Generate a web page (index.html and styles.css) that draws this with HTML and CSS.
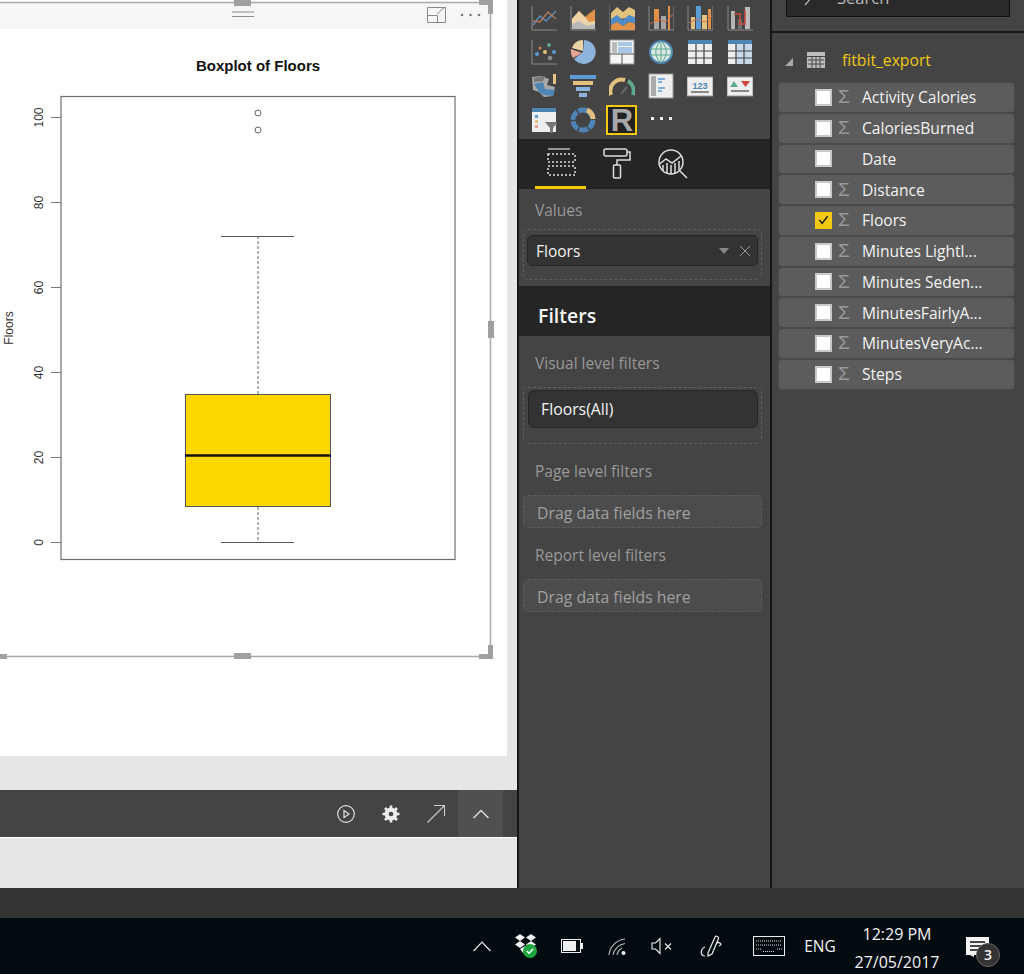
FILE: index.html
```html
<!DOCTYPE html>
<html>
    <head>
        <meta charset="utf-8">
        <title>Boxplot of Floors</title>

        <link rel="stylesheet" href="styles.css">
    </head>

    <body>

        <div class="workspace">

            <!-- Report canvas -->
            <section class="canvas">
                <div class="report-page">
                    <svg class="chart" width="507" height="756" viewBox="0 0 507 756">
                        <rect x="0" y="3" width="490" height="26" fill="#f6f6f6"/>
                        <path d="M232 12h22M232 16.500h22" stroke="#8c8c8c" fill="none"/>
                        <path d="M445.500 14V7.500H427.500V22.500H445.500V14M427.500 15.500H437.500V22.500M437 14L445 7M440 7.500H445.500V12" stroke="#8a8a8a" fill="none"/>
                        <circle cx="462" cy="15" r="1.300" fill="#777"/>
                        <circle cx="470.500" cy="15" r="1.300" fill="#777"/>
                        <circle cx="479" cy="15" r="1.300" fill="#777"/>

                        <text class="chart-title" x="258" y="71">Boxplot of Floors</text>
                        <rect x="61" y="96.500" width="394" height="463" fill="#fff" stroke="#6e6e6e" stroke-width="1.200"/>

                        <path d="M51 542.500H61M51 457.500H61M51 372.500H61M51 287.500H61M51 202.500H61M51 117.500H61" stroke="#777" fill="none"/>
                        <text class="chart-tick" transform="translate(43 542.500) rotate(-90)">0</text>
                        <text class="chart-tick" transform="translate(43 457.500) rotate(-90)">20</text>
                        <text class="chart-tick" transform="translate(43 372.500) rotate(-90)">40</text>
                        <text class="chart-tick" transform="translate(43 287.500) rotate(-90)">60</text>
                        <text class="chart-tick" transform="translate(43 202.500) rotate(-90)">80</text>
                        <text class="chart-tick" transform="translate(43 117.500) rotate(-90)">100</text>
                        <text class="chart-tick" transform="translate(13 328) rotate(-90)">Floors</text>

                        <path d="M258 236V394M258 507V542" stroke="#666" stroke-dasharray="3 2" fill="none"/>
                        <path d="M221 236.500H294M221 542.500H294" stroke="#555" fill="none"/>
                        <rect x="185.500" y="394.500" width="145" height="112" fill="#ffd700" stroke="#555"/>
                        <path d="M185 455.500H331" stroke="#111" stroke-width="2.500"/>
                        <circle cx="258" cy="113" r="3" fill="none" stroke="#666"/>
                        <circle cx="258" cy="130" r="3" fill="none" stroke="#666"/>

                        <path d="M0 2.500H490.500V656.500H0" fill="none" stroke="#a8a8a8" stroke-width="1.500"/>
                        <rect x="234" y="0" width="17" height="6" fill="#a0a0a0"/>
                        <rect x="488" y="321" width="6" height="17" fill="#a0a0a0"/>
                        <rect x="234" y="653" width="17" height="6" fill="#a0a0a0"/>
                        <rect x="0" y="654" width="7" height="5" fill="#a0a0a0"/>
                        <path d="M479 0H493V14H488V5H479Z" fill="#a0a0a0"/>
                        <path d="M479 659H493V645H488V654H479Z" fill="#a0a0a0"/>
                    </svg>
                </div>

                <div class="page-toolbar">
                    <button class="tool-button">
                        <svg width="20" height="20" viewBox="0 0 20 20"><circle cx="10" cy="10" r="8.300" fill="none" stroke="#ddd" stroke-width="1.200"/><path d="M8 6.500L13 10L8 13.500Z" fill="none" stroke="#ddd" stroke-width="1.200"/></svg>
                    </button>
                    <button class="tool-button">
                        <svg width="20" height="20" viewBox="0 0 20 20"><circle cx="10" cy="10" r="5" fill="none" stroke="#eee" stroke-width="3"/><path d="M10 1.500V18.500M1.500 10H18.500M4 4L16 16M16 4L4 16" stroke="#eee" stroke-width="2.600"/><circle cx="10" cy="10" r="2.300" fill="#444"/></svg>
                    </button>
                    <button class="tool-button">
                        <svg width="20" height="20" viewBox="0 0 20 20"><path d="M1.500 18.500L18.500 1.500M8 1.500H18.500V12" fill="none" stroke="#ccc" stroke-width="1.100"/></svg>
                    </button>
                    <button class="tool-button tool-button-active">
                        <svg width="20" height="20" viewBox="0 0 20 20"><path d="M2.500 14L10 6.500L17.500 14" fill="none" stroke="#ddd" stroke-width="1.500"/></svg>
                    </button>
                </div>
            </section>

            <!-- Visualizations pane -->
            <aside class="viz-pane">
                <div class="viz-grid">
                    <svg class="viz-icon" viewBox="0 0 26 26"><path d="M1 1V25H26" fill="none" stroke="#8a8a8a"/><path d="M2 20L9 11L15 16L25 6" fill="none" stroke="#5d8fc0" stroke-width="1.300"/><path d="M2 16L9 17L17 7L25 14" fill="none" stroke="#b5785a" stroke-width="1.300"/></svg>
                    <svg class="viz-icon" viewBox="0 0 26 26"><path d="M1 1V25H26" fill="none" stroke="#8a8a8a"/><path d="M2 24V14L9 6L15 12L25 4V24Z" fill="#e0914a"/><path d="M2 24V14L9 6L15 12L19 17L25 16V24Z" fill="#ecd4a8"/><path d="M2 24V19L9 16L17 21L25 19V24Z" fill="#b9b9b9"/></svg>
                    <svg class="viz-icon" viewBox="0 0 26 26"><path d="M0 0V26H28" fill="none" stroke="#8a8a8a"/><path d="M2 8L8 2L14 7L20 2L28 6V13L2 14Z" fill="#e3c27f"/><path d="M2 14L8 10L14 15L20 10L28 13V19L20 17L14 21L8 17L2 20Z" fill="#4f8bc8"/><path d="M2 20L8 17L14 21L20 17L28 19V25H2Z" fill="#e0914a"/></svg>
                    <svg class="viz-icon" viewBox="0 0 26 26"><path d="M1 1V25H26M26 1V25" fill="none" stroke="#8a8a8a"/><rect x="6" y="4" width="5" height="20" fill="#e0914a"/><rect x="13" y="11" width="5" height="13" fill="#a5a5a5"/><rect x="20" y="1" width="2" height="24" fill="#e0914a"/><rect x="6" y="17" width="5" height="7" fill="#a5a5a5"/><path d="M2 19L10 14L18 17L25 9" fill="none" stroke="#d07050"/></svg>
                    <svg class="viz-icon" viewBox="0 0 26 26"><path d="M1 1V25H26M26 1V25" fill="none" stroke="#8a8a8a"/><rect x="4" y="12" width="4" height="12" fill="#e3c27f"/><rect x="9" y="1" width="5" height="23" fill="#5d9bd5"/><rect x="15" y="10" width="5" height="14" fill="#e3c27f"/><rect x="21" y="4" width="3" height="20" fill="#e0914a"/><path d="M2 18L10 14L18 17L25 11" fill="none" stroke="#d07050"/></svg>
                    <svg class="viz-icon" viewBox="0 0 26 26"><path d="M1 1V25H26" fill="none" stroke="#8a8a8a"/><rect x="4" y="6" width="4" height="18" fill="#b5b5b5"/><rect x="11" y="14" width="4" height="10" fill="#6e6e6e"/><rect x="18" y="2" width="5" height="22" fill="#bdbdbd"/><path d="M7 9H13V19H18V5" fill="none" stroke="#d0483c" stroke-width="1.500"/></svg>

                    <svg class="viz-icon" viewBox="0 0 26 26"><path d="M1 1V25H26" fill="none" stroke="#8a8a8a"/><circle cx="6" cy="15" r="2" fill="#5d9bd5"/><circle cx="9" cy="9" r="1.500" fill="#d08060"/><circle cx="14" cy="13" r="2" fill="#e3c27f"/><circle cx="18" cy="6" r="2" fill="#5fa98c"/><circle cx="23" cy="13" r="2" fill="#5d9bd5"/><circle cx="19" cy="19" r="2.300" fill="#8a8a8a"/></svg>
                    <svg class="viz-icon" viewBox="0 0 26 26"><path d="M14 1A12 12 0 1 1 4 20L13 13Z" fill="#8db4dc"/><path d="M13 12L13 1A12 12 0 0 0 2 9Z" fill="#ecd4a8"/><path d="M12 14L1 10A12 12 0 0 0 3 19Z" fill="#e5a493"/></svg>
                    <svg class="viz-icon" viewBox="0 0 26 26"><rect x="1" y="1" width="24" height="24" fill="#f4f4f4" stroke="#999"/><rect x="9" y="3" width="14" height="4" fill="#a9c6e4"/><rect x="3" y="3" width="5" height="11" fill="#bbb"/><rect x="9" y="8" width="14" height="6" fill="#a9c6e4"/><path d="M1 15H25M13 15V25" stroke="#555"/></svg>
                    <svg class="viz-icon" viewBox="0 0 26 26"><circle cx="13" cy="13" r="11" fill="#d8e8e4" stroke="#4f85b5" stroke-width="2"/><path d="M2 10H24M2 16H24M13 2V24M13 2C6 8 6 18 13 24M13 2C20 8 20 18 13 24" stroke="#5fa98c" fill="none"/></svg>
                    <svg class="viz-icon" viewBox="0 0 26 26"><rect x="1" y="1" width="24" height="24" fill="#eee"/><rect x="1" y="1" width="24" height="4" fill="#4f85b5"/><path d="M9 5V25M17 5V25M1 12H25M1 19H25" stroke="#444" stroke-width="1.200"/></svg>
                    <svg class="viz-icon" viewBox="0 0 26 26"><rect x="1" y="1" width="24" height="24" fill="#c8d9ea"/><rect x="1" y="1" width="24" height="4" fill="#4f85b5"/><rect x="1" y="5" width="8" height="20" fill="#eee"/><path d="M9 5V25M17 5V25M1 12H25M1 19H25" stroke="#444" stroke-width="1.200"/></svg>

                    <svg class="viz-icon" viewBox="0 0 26 26"><path d="M1 4L10 3L18 6L16 12L24 14L22 23L13 24L8 19L2 17Z" fill="#a8a8a8"/><path d="M3 11L12 9L14 16L24 17L22 23L13 22L8 19Z" fill="#4f85b5"/><path d="M3 5L14 3L12 8L3 9Z" fill="#777"/><rect x="22" y="1" width="3" height="10" fill="#e3c27f"/></svg>
                    <svg class="viz-icon" viewBox="0 0 26 26"><rect x="0" y="2" width="26" height="4" fill="#5d9bd5"/><rect x="3" y="8" width="20" height="4" fill="#e3c27f"/><rect x="6" y="14" width="14" height="4" fill="#8db4dc"/><rect x="9" y="20" width="8" height="4" fill="#8db4dc"/></svg>
                    <svg class="viz-icon" viewBox="0 0 26 26"><path d="M2 22A11.500 11.500 0 0 1 16 7" fill="none" stroke="#e3c27f" stroke-width="4"/><path d="M19 8A11.500 11.500 0 0 1 24 22" fill="none" stroke="#5fa98c" stroke-width="4"/><path d="M12 21L18 14" stroke="#666" stroke-width="2"/></svg>
                    <svg class="viz-icon" viewBox="0 0 26 26"><rect x="1" y="1" width="24" height="24" fill="#eee" stroke="#999"/><rect x="3" y="3" width="5" height="20" fill="#aaa"/><path d="M10 6H17M10 9H14M10 15H17M10 18H14" stroke="#5d9bd5" stroke-width="1.500"/></svg>
                    <svg class="viz-icon" viewBox="0 0 26 26"><rect x="0" y="4" width="26" height="19" fill="#eee" stroke="#999"/><text class="viz-number" x="13" y="16">123</text><rect x="4" y="18" width="18" height="2" fill="#888"/></svg>
                    <svg class="viz-icon" viewBox="0 0 26 26"><rect x="0" y="4" width="26" height="19" fill="#eee" stroke="#999"/><path d="M7 8L11 14H3Z" fill="#5fa98c"/><path d="M14 8H23L18.500 14Z" fill="#d0483c"/><rect x="4" y="17" width="18" height="2" fill="#888"/></svg>

                    <svg class="viz-icon" viewBox="0 0 26 26"><rect x="1" y="1" width="24" height="24" fill="#eee"/><rect x="1" y="1" width="24" height="4" fill="#4f85b5"/><rect x="4" y="8" width="3" height="3" fill="#5d9bd5"/><rect x="4" y="13" width="3" height="3" fill="#e3c27f"/><rect x="4" y="18" width="3" height="3" fill="#e5a493"/><path d="M14 15H27L22 21V27H19V21Z" fill="#777"/></svg>
                    <svg class="viz-icon" viewBox="0 0 26 26"><circle cx="13" cy="13" r="10" fill="none" stroke="#4f85b5" stroke-width="5" stroke-dasharray="9 1.500"/><path d="M17 3A10 10 0 0 1 23 12" fill="none" stroke="#e3c27f" stroke-width="5"/></svg>
                    <div class="viz-selected"><span class="viz-letter">R</span></div>
                    <div class="viz-more">
                        <span class="viz-dot"></span>
                        <span class="viz-dot"></span>
                        <span class="viz-dot"></span>
                    </div>
                </div>

                <div class="viz-tabs">
                    <div class="viz-tab viz-tab-active">
                        <svg width="32" height="30" viewBox="0 0 32 30"><path d="M3 1H25" stroke="#bbb" stroke-width="1.500"/><path d="M3 6H30V14H3ZM3 18H30V27H3Z" fill="none" stroke="#ddd" stroke-dasharray="2 2" stroke-width="1.500"/></svg>
                    </div>
                    <div class="viz-tab">
                        <svg width="30" height="32" viewBox="0 0 30 32"><rect x="2" y="1" width="23" height="7" rx="2" fill="none" stroke="#ddd" stroke-width="1.500"/><path d="M25 4H28V12H15V17" fill="none" stroke="#ddd" stroke-width="1.500"/><rect x="11.500" y="17" width="7" height="13" rx="1" fill="none" stroke="#ddd" stroke-width="1.500"/></svg>
                    </div>
                    <div class="viz-tab">
                        <svg width="32" height="32" viewBox="0 0 32 32"><circle cx="14" cy="14" r="12" fill="none" stroke="#ddd" stroke-width="1.500"/><path d="M2.500 16L9 11L15 15L24 8M6 17V23M10 15V25M14 17V26M18 15V25M22 13V22M23 23L30 30" fill="none" stroke="#ddd" stroke-width="1.500"/></svg>
                    </div>
                </div>

                <div class="well-label well-label-first">Values</div>
                <div class="field-well">
                    <div class="field-pill">
                        <span class="field-pill-name">Floors</span>
                        <span class="field-pill-caret"></span>
                        <svg width="12" height="12" viewBox="0 0 12 12"><path d="M1 1L11 11M11 1L1 11" stroke="#999"/></svg>
                    </div>
                </div>

                <h2 class="filters-title">Filters</h2>

                <div class="well-label well-label-next">Visual level filters</div>
                <div class="field-well field-well-filter">
                    <div class="filter-pill">Floors(All)</div>
                </div>

                <div class="well-label well-label-next">Page level filters</div>
                <div class="drop-well">Drag data fields here</div>

                <div class="well-label well-label-next">Report level filters</div>
                <div class="drop-well">Drag data fields here</div>
            </aside>

            <!-- Fields pane -->
            <aside class="fields-pane">
                <div class="search-area">
                    <div class="search-box">
                        <svg width="16" height="10" viewBox="0 0 16 10"><path d="M2 9L9 1" stroke="#bbb" stroke-width="1.200"/></svg>
                        <span class="search-text">Search</span>
                    </div>
                </div>

                <div class="table-head">
                    <span class="table-caret"></span>
                    <svg width="18" height="16" viewBox="0 0 18 16"><rect width="18" height="16" fill="#bdbdbd"/><path d="M0 4.500H18M1 8H17M1 12H17M5 4V16M9 4V16M13 4V16" stroke="#444"/></svg>
                    <span class="table-name">fitbit_export</span>
                </div>

                <ul class="field-list">
                    <li class="field-row"><span class="check"></span><span class="sigma">Σ</span><span class="field-name">Activity Calories</span></li>
                    <li class="field-row"><span class="check"></span><span class="sigma">Σ</span><span class="field-name">CaloriesBurned</span></li>
                    <li class="field-row"><span class="check"></span><span class="sigma"></span><span class="field-name">Date</span></li>
                    <li class="field-row"><span class="check"></span><span class="sigma">Σ</span><span class="field-name">Distance</span></li>
                    <li class="field-row"><span class="check check-on"><svg width="14" height="14" viewBox="0 0 14 14"><path d="M2.500 7L5.500 10.500L11.500 3" fill="none" stroke="#222" stroke-width="1.600"/></svg></span><span class="sigma">Σ</span><span class="field-name">Floors</span></li>
                    <li class="field-row"><span class="check"></span><span class="sigma">Σ</span><span class="field-name">Minutes Lightl...</span></li>
                    <li class="field-row"><span class="check"></span><span class="sigma">Σ</span><span class="field-name">Minutes Seden...</span></li>
                    <li class="field-row"><span class="check"></span><span class="sigma">Σ</span><span class="field-name">MinutesFairlyA...</span></li>
                    <li class="field-row"><span class="check"></span><span class="sigma">Σ</span><span class="field-name">MinutesVeryAc...</span></li>
                    <li class="field-row"><span class="check"></span><span class="sigma">Σ</span><span class="field-name">Steps</span></li>
                </ul>
            </aside>
        </div>

        <div class="status-strip"></div>

        <!-- Windows taskbar -->
        <footer class="taskbar">
            <div class="tray-item tray-chevron">
                <svg width="20" height="12" viewBox="0 0 20 12"><path d="M1.500 11L10 2L18.500 11" fill="none" stroke="#e8e8e8" stroke-width="1.200"/></svg>
            </div>
            <div class="tray-item tray-dropbox">
                <svg width="26" height="26" viewBox="0 0 26 26"><path d="M6 1L11 4.500L6 8L1 4.500ZM17 1L22 4.500L17 8L12 4.500ZM6 8L11 11.500L6 15L1 11.500ZM17 8L22 11.500L17 15L12 11.500ZM6 16L11 13L11.500 18L9 20Z" fill="#f4f4f4"/><circle cx="16" cy="18" r="7" fill="#22a63f"/><path d="M12.800 18L15 20.300L19.300 15.800" fill="none" stroke="#fff" stroke-width="1.300"/></svg>
            </div>
            <div class="tray-item tray-battery">
                <svg width="22" height="14" viewBox="0 0 22 14"><rect x="0.500" y="0.500" width="19" height="13" fill="none" stroke="#eee"/><rect x="2" y="2" width="13" height="10" fill="#eee"/><rect x="20" y="4" width="2" height="6" fill="#eee"/></svg>
            </div>
            <div class="tray-item tray-wifi">
                <svg width="20" height="20" viewBox="0 0 20 20"><path d="M1 19A18 18 0 0 1 17 3M5 19A14 14 0 0 1 17 7.500M9 19A10 10 0 0 1 14 12" fill="none" stroke="#bbb" stroke-width="1.100"/><circle cx="15.500" cy="17" r="2" fill="#f4f4f4"/></svg>
            </div>
            <div class="tray-item tray-sound">
                <svg width="22" height="18" viewBox="0 0 22 18"><path d="M1 6H4.500L9 1.500V16.500L4.500 12H1Z" fill="none" stroke="#eee" stroke-width="1.100"/><path d="M14 6.500L20 12.500M20 6.500L14 12.500" stroke="#eee" stroke-width="1.100"/></svg>
            </div>
            <div class="tray-item tray-pen">
                <svg width="24" height="24" viewBox="0 0 24 24"><path d="M9 19L16 3C17 1.500 20 2.500 19.500 4.500L13 20L9 22ZM18 9C21 8 24 10.500 20 12M6 13C1 15 1 22 6 22" fill="none" stroke="#eee" stroke-width="1.200"/></svg>
            </div>
            <div class="tray-item tray-keyboard">
                <svg width="32" height="20" viewBox="0 0 32 20"><rect x="0.500" y="0.500" width="31" height="19" fill="none" stroke="#eee"/><path d="M3 5H29M3 9H29M3 13H8M24 13H29M10 15.500H22" stroke="#ddd" stroke-dasharray="1 1"/></svg>
            </div>
            <div class="tray-item tray-lang">ENG</div>
            <div class="tray-clock">
                <div>12:29 PM</div>
                <div>27/05/2017</div>
            </div>
            <div class="tray-notify">
                <svg class="notify-icon" width="23" height="20" viewBox="0 0 23 20"><path d="M0 0H23V18H8V20L4 18H0Z" fill="#f4f4f4"/><path d="M4 5H19M4 9H19M4 13H14" stroke="#111" stroke-width="1.300"/></svg>
                <span class="notify-badge">3</span>
            </div>
        </footer>

    </body>
</html>
```

FILE: styles.css
```css
* {
    box-sizing: border-box;
}

body {
    margin: 0;
    width: 1024px;
    height: 974px;
    overflow: hidden;
    font-family: "Open Sans", "Noto Sans", sans-serif;
    background: #333;
}

/* Main area */

.workspace {
    display: flex;
    height: 888px;
}

.status-strip {
    height: 30px;
    background: #333;
}

/* Report canvas */

.canvas {
    width: 517px;
    background: #e6e6e6;
}

.report-page {
    width: 507px;
    height: 756px;
    background: #fff;
}

.chart {
    display: block;
}

.chart-title {
    font: bold 15px "Liberation Sans", sans-serif;
    text-anchor: middle;
    fill: #111;
}

.chart-tick {
    font: 12px "Liberation Sans", sans-serif;
    text-anchor: middle;
    fill: #333;
}

.page-toolbar {
    display: flex;
    justify-content: flex-end;
    align-items: stretch;
    margin-top: 34px;
    padding-right: 14px;
    height: 48px;
    background: #444;
    border-bottom: 1px solid #fff;
}

.tool-button {
    display: flex;
    justify-content: center;
    align-items: center;
    padding: 0;
    width: 45px;
    border: 0;
    background: transparent;
}

.tool-button-active {
    background: #505050;
}

/* Visualizations pane */

.viz-pane {
    width: 255px;
    background: #444;
    border-left: 2px solid #161616;
    border-right: 2px solid #161616;
}

.viz-grid {
    display: grid;
    grid-template-columns: repeat(6, 39.200px);
    grid-auto-rows: 34px;
    justify-items: center;
    align-items: center;
    padding: 1px 0 0 5px;
    height: 139px;
}

.viz-icon {
    width: 26px;
    height: 26px;
}

.viz-number {
    font: bold 9px "Liberation Sans", sans-serif;
    text-anchor: middle;
    fill: #4f85b5;
}

.viz-selected {
    display: flex;
    justify-content: center;
    align-items: center;
    width: 31px;
    height: 30px;
    background: #222;
    border: 2px solid #f2c811;
}

.viz-letter {
    font: bold 31px/1 "Liberation Sans", sans-serif;
    color: #a8a8a8;
}

.viz-more {
    display: flex;
    justify-content: center;
    gap: 6px;
    margin-bottom: 4px;
}

.viz-dot {
    width: 3px;
    height: 3px;
    background: #eee;
}

.viz-tabs {
    display: flex;
    height: 50px;
    padding-left: 16px;
    background: #252525;
}

.viz-tab {
    display: flex;
    justify-content: center;
    align-items: center;
    margin-right: 5px;
    width: 51px;
    height: 50px;
}

.viz-tab-active {
    border-bottom: 3px solid #f2c811;
}

.well-label {
    padding-left: 16px;
    font-size: 15.500px;
    line-height: 20px;
    color: #999;
}

.well-label-first {
    margin-top: 11px;
}

.well-label-next {
    margin-top: 17px;
}

.field-well {
    margin: 9px 8px 0 4px;
    padding: 5px 3px;
    height: 51px;
    border: 1px dashed #5e5e5e;
    border-radius: 5px;
}

.field-pill {
    display: flex;
    align-items: center;
    padding: 0 6px 0 8px;
    height: 31px;
    font-size: 15.500px;
    color: #f2f2f2;
    background: #333;
    border: 1px solid #262626;
    border-radius: 5px;
}

.field-pill-name {
    flex: 1;
}

.field-pill-caret {
    margin-right: 10px;
    border-left: 5px solid transparent;
    border-right: 5px solid transparent;
    border-top: 6px solid #888;
}

.filters-title {
    margin: 6px 0 0;
    padding-left: 19px;
    height: 50px;
    font-size: 19.500px;
    font-weight: 600;
    line-height: 59px;
    color: #f5f5f5;
    background: #252525;
}

.field-well-filter {
    margin-top: 14px;
    padding: 2px 3px 0 4px;
    height: 57px;
}

.filter-pill {
    padding-left: 12px;
    height: 38px;
    font-size: 15.800px;
    line-height: 36px;
    color: #f2f2f2;
    background: #333;
    border: 1px solid #262626;
    border-radius: 6px;
}

.drop-well {
    margin: 14px 8px 0 4px;
    padding-left: 13px;
    height: 33px;
    font-size: 15.800px;
    line-height: 34px;
    color: #a0a0a0;
    background: #4c4c4c;
    border: 1px dashed #5e5e5e;
    border-radius: 5px;
}

/* Fields pane */

.fields-pane {
    flex: 1;
    background: #444;
}

.search-area {
    height: 33px;
    padding: 0 14px;
    border-bottom: 2px solid #161616;
}

.search-box {
    display: flex;
    align-items: flex-end;
    gap: 18px;
    padding-left: 16px;
    height: 17px;
    overflow: hidden;
    background: #2a2a2a;
    border: 1px solid #111;
    border-top: 0;
}

.search-box svg {
    margin-bottom: 10px;
}

.search-text {
    margin-bottom: 11px;
    font-size: 16.500px;
    line-height: 14px;
    color: #bbb;
}

.table-head {
    display: flex;
    align-items: center;
    margin-top: 17px;
    padding-left: 13px;
    height: 20px;
}

.table-caret {
    margin-top: 3px;
    margin-right: 14px;
    border-left: 8px solid transparent;
    border-bottom: 8px solid #aaa;
}

.table-name {
    margin-left: 17px;
    font-size: 15.700px;
    color: #f2c811;
}

.field-list {
    margin: 13px 0 0 7px;
    padding: 0;
    width: 235px;
    list-style: none;
}

.field-row {
    display: flex;
    align-items: center;
    margin-bottom: 2px;
    padding-left: 36px;
    height: 28.750px;
    background: #5c5c5c;
    border-radius: 3px;
    box-shadow: 0 0 0 1px #4a4a4a;
}

.check {
    display: flex;
    justify-content: center;
    align-items: center;
    width: 17px;
    height: 17px;
    background: #fff;
    border: 2px solid #c8c8c8;
}

.check-on {
    background: #f2c811;
    border-color: #f2c811;
}

.sigma {
    margin-left: 6px;
    width: 24px;
    font-family: "Liberation Sans", sans-serif;
    font-size: 19px;
    line-height: 20px;
    color: #999;
}

.field-name {
    font-size: 15.600px;
    color: #f2f2f2;
    white-space: nowrap;
}

/* Taskbar */

.taskbar {
    display: flex;
    align-items: center;
    padding-left: 459px;
    height: 56px;
    color: #f2f2f2;
    background: #020b10;
}

.tray-item {
    display: flex;
    justify-content: center;
    align-items: center;
}

.tray-chevron {
    width: 46px;
}

.tray-dropbox {
    width: 44px;
}

.tray-battery {
    width: 46px;
}

.tray-wifi {
    width: 46px;
}

.tray-sound {
    width: 42px;
}

.tray-pen {
    width: 56px;
}

.tray-keyboard {
    width: 60px;
}

.tray-lang {
    width: 42px;
    font-size: 15.500px;
}

.tray-clock {
    width: 112px;
    padding-top: 4px;
    font-size: 16px;
    line-height: 28px;
    text-align: center;
}

.tray-notify {
    position: relative;
    margin-left: 13px;
    width: 40px;
    height: 40px;
}

.notify-icon {
    position: absolute;
    top: 11px;
    left: 0;
}

.notify-badge {
    position: absolute;
    top: 17px;
    left: 10px;
    width: 24px;
    height: 24px;
    font-size: 14px;
    font-weight: 600;
    line-height: 22px;
    text-align: center;
    color: #f2f2f2;
    background: #333;
    border: 1px solid #666;
    border-radius: 50%;
}
```
